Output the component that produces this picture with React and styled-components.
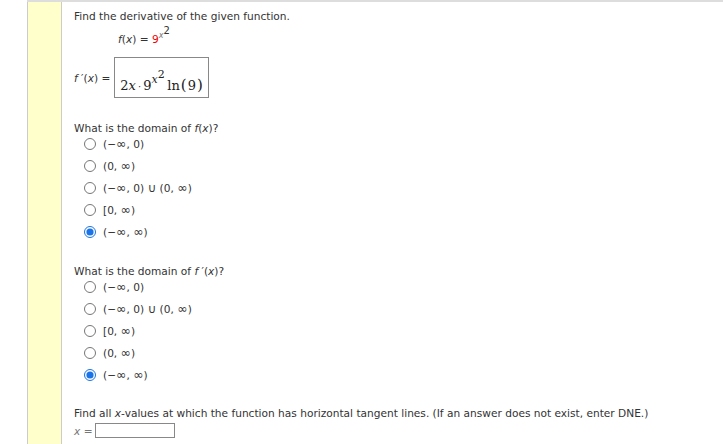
import React from 'react';
import styled, { createGlobalStyle } from 'styled-components';

const GlobalStyle = createGlobalStyle`
  html, body {
    margin: 0;
    padding: 0;
    background: #fff;
  }
  body {
    font-family: "DejaVu Sans", Verdana, sans-serif;
    font-size: 10.6px;
    color: #333;
  }
`;

const Page = styled.div`
  display: flex;
  height: 444px;
  padding-left: 27px;
  overflow: hidden;
`;

const Frame = styled.div`
  flex: 1;
  display: flex;
  border-top: 2px solid #ddd;
`;

const Gutter = styled.div`
  width: 33px;
  background: #ffffcc;
  border-left: 1px solid #ccc;
  border-right: 1px solid #ccc;
`;

const Content = styled.div`
  flex: 1;
  padding: 7px 0 0 12px;
`;

const Prompt = styled.p`
  margin: 0;
  line-height: 14px;
  height: 14px;
  white-space: nowrap;
`;

const Given = styled.div`
  margin: 8px 0 0 44px;
  line-height: 14px;
  height: 14px;
`;

const Ital = styled.i`
  font-style: italic;
`;

const Red = styled.span`
  color: #e00;
`;

const Sup = styled.sup`
  font-size: ${props => props.$size || '8px'};
  vertical-align: ${props => props.$lift || '6px'};
  line-height: 0;
  color: ${props => props.$color || 'inherit'};
`;

const AnswerRow = styled.div`
  margin-top: 12px;
  display: flex;
  align-items: center;
  gap: 4px;
`;

const MathBox = styled.div`
  border: 1px solid #888;
  box-sizing: border-box;
  height: 41px;
  padding: 17px 5px 0 5px;
  line-height: 18px;
  font-family: "DejaVu Serif", "Liberation Serif", serif;
  font-size: 13px;
  color: #222;
  white-space: nowrap;
`;

const Dot = styled.span`
  margin: 0 2px;
  font-size: 10px;
`;

const Paren = styled.span`
  font-size: 15px;
  margin: ${props => props.$side === 'l' ? '0 1px 0 1px' : '0 0 0 1px'};
`;

const Section = styled.div`
  margin-top: ${props => props.$top || '24px'};
`;

const Options = styled.div`
  display: flex;
  flex-direction: column;
  gap: 8px;
  margin: 2px 0 0 10px;
`;

const Option = styled.label`
  display: flex;
  align-items: center;
  gap: 7px;
  height: 14px;
  white-space: nowrap;
`;

const Radio = styled.input`
  margin: 0;
  width: 12px;
  height: 12px;
  accent-color: #1a73e8;
`;

const Inf = styled.span`
  font-size: 12.5px;
  line-height: 0;
`;

const Cup = styled.span`
  font-size: 12px;
  line-height: 0;
`;

const Field = styled.input`
  width: 80px;
  height: 15px;
  box-sizing: border-box;
  border: 1px solid #888;
  margin: 0 0 0 2px;
  padding: 0;
`;

const XRow = styled.div`
  display: flex;
  align-items: center;
  height: 15px;
  margin-top: 3px;
  color: #777;
`;

const parts = text =>
  text.split(/(∞|∪)/).map((p, i) =>
    p === '∞' ? <Inf key={i}>∞</Inf> : p === '∪' ? <Cup key={i}>∪</Cup> : p
  );

const DOMAIN_F = [
  '(−∞, 0)',
  '(0, ∞)',
  '(−∞, 0) ∪ (0, ∞)',
  '[0, ∞)',
  '(−∞, ∞)',
];

const DOMAIN_FP = [
  '(−∞, 0)',
  '(−∞, 0) ∪ (0, ∞)',
  '[0, ∞)',
  '(0, ∞)',
  '(−∞, ∞)',
];

const Choices = ({ name, items, selected }) => (
  <Options>
    {items.map((item, i) => (
      <Option key={i}>
        <Radio type="radio" name={name} defaultChecked={i === selected} />
        <span>{parts(item)}</span>
      </Option>
    ))}
  </Options>
);

const App = () => (
  <>
    <GlobalStyle />
    <Page>
      <Frame>
        <Gutter />
        <Content>
          <Prompt>Find the derivative of the given function.</Prompt>
          <Given>
            <Ital>f</Ital>(<Ital>x</Ital>) = <Red>9</Red>
            <Sup $size="8px" $lift="5px" $color="#777">
              <Ital>x</Ital>
              <Sup $size="10px" $lift="4px" $color="#333">2</Sup>
            </Sup>
          </Given>
          <AnswerRow>
            <span>
              <Ital>f</Ital> ′(<Ital>x</Ital>) =
            </span>
            <MathBox>
              2<Ital>x</Ital>
              <Dot>·</Dot>9
              <Sup $size="11px" $lift="7px">
                <Ital>x</Ital>
                <Sup $size="11px" $lift="5px">2</Sup>
              </Sup>
              &thinsp;ln<Paren $side="l">(</Paren>9<Paren>)</Paren>
            </MathBox>
          </AnswerRow>
          <Section $top="23px">
            <Prompt>
              What is the domain of <Ital>f</Ital>(<Ital>x</Ital>)?
            </Prompt>
            <Choices name="df" items={DOMAIN_F} selected={4} />
          </Section>
          <Section $top="25px">
            <Prompt>
              What is the domain of <Ital>f</Ital> ′(<Ital>x</Ital>)?
            </Prompt>
            <Choices name="dfp" items={DOMAIN_FP} selected={4} />
          </Section>
          <Section $top="24px">
            <Prompt>
              Find all <Ital>x</Ital>-values at which the function has horizontal tangent
              lines. (If an answer does not exist, enter DNE.)
            </Prompt>
            <XRow>
              <Ital>x</Ital>&nbsp;=
              <Field type="text" />
            </XRow>
          </Section>
        </Content>
      </Frame>
    </Page>
  </>
);

export default App;
